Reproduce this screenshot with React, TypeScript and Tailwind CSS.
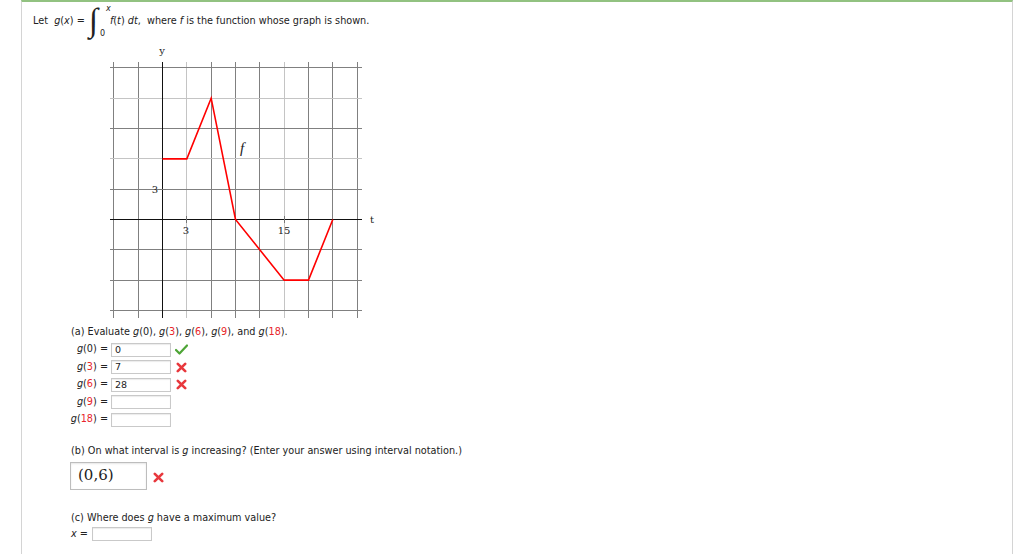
import React from 'react';

const F = "font-['DejaVu_Sans',Verdana,sans-serif]";

const Check = () => (
  <svg width="13" height="11" viewBox="0 0 13 11" className="shrink-0">
    <path d="M1 6 L4.5 9.5 L12 1.5" fill="none" stroke="#4ea536" strokeWidth="2.2" strokeLinecap="round" strokeLinejoin="round" />
  </svg>
);

const Cross = () => (
  <svg width="11" height="11" viewBox="0 0 11 11" className="shrink-0">
    <path d="M1.8 1.8 L9.2 9.2 M9.2 1.8 L1.8 9.2" fill="none" stroke="#e8383d" strokeWidth="2.6" strokeLinecap="round" />
  </svg>
);

// italic g with its argument; the argument is red unless told otherwise
const G = ({ n, red = true }: { n: string; red?: boolean }) => (
  <span>
    <i>g</i>(<span className={red ? 'text-[#e8262b]' : ''}>{n}</span>)
  </span>
);

const Graph = () => {
  const ox = 62; // y axis, svg coords
  const oy = 179; // x axis
  const dx = 24.33;
  const dy = 30.33;
  const xs = [-2, -1, 0, 1, 2, 3, 4, 5, 6, 7, 8];
  const ys = [-3, -2, -1, 0, 1, 2, 3, 4, 5];
  const light = new Set(['x1', 'x5', 'y2', 'y4']);
  const px = (k: number) => Math.round(ox + k * dx) + 0.5;
  const py = (j: number) => Math.round(oy - j * dy) + 0.5;
  const pts = [
    [0, 2], [1, 2], [2, 4], [3, 0], [5, -2], [6, -2], [7, 0],
  ].map(([k, j]) => `${ox + k * dx + 0.5},${oy - j * dy + 0.5}`).join(' ');
  return (
    <svg width="280" height="280" className="block">
      {xs.map((k) => (
        <line key={'x' + k} x1={px(k)} x2={px(k)} y1={22} y2={278}
          stroke={light.has('x' + k) ? '#c4c4c4' : '#808080'} strokeWidth="1" />
      ))}
      {ys.map((j) => (
        <line key={'y' + j} x1={10} x2={262} y1={py(j)} y2={py(j)}
          stroke={light.has('y' + j) ? '#c4c4c4' : '#808080'} strokeWidth="1" />
      ))}
      <line x1={10} x2={262} y1={oy + 0.5} y2={oy + 0.5} stroke="#111" strokeWidth="1" />
      <line x1={ox + 0.5} x2={ox + 0.5} y1={22} y2={278} stroke="#111" strokeWidth="1" />
      <line x1={ox - 4} x2={ox + 4} y1={py(1)} y2={py(1)} stroke="#777" />
      <line x1={px(1)} x2={px(1)} y1={oy - 3} y2={oy + 4} stroke="#777" />
      <line x1={px(5)} x2={px(5)} y1={oy - 3} y2={oy + 4} stroke="#777" />
      <polyline points={pts} fill="none" stroke="#ff0000" strokeWidth="1.6" strokeLinejoin="miter" />
      <g fontFamily="'DejaVu Serif','Liberation Serif',serif" fontSize="10" fill="#222">
        <text x={62} y={14} textAnchor="middle">y</text>
        <text x={270} y={183}>t</text>
        <text x={55} y={153} textAnchor="middle">3</text>
        <text x={86} y={194} textAnchor="middle">3</text>
        <text x={184} y={194} textAnchor="middle">15</text>
        <text x={140} y={113} fontSize="15" fontStyle="italic" fontFamily="'Liberation Serif',serif">f</text>
      </g>
    </svg>
  );
};

const Row = ({ label, value, mark }: { label: React.ReactNode; value: string; mark?: 'ok' | 'bad' }) => (
  <div className="flex items-center h-[17.5px]">
    <div className="w-[89px] text-right pr-[3px] whitespace-nowrap">{label} =</div>
    <div className="w-[60px] h-[14px] border border-[#c9c9c9] bg-white shadow-[inset_0_1px_1px_rgba(0,0,0,0.08)] pl-[3px] leading-[12px] text-[9.5px]">{value}</div>
    <div className="w-[21px] flex justify-center">
      {mark === 'ok' && <Check />}
      {mark === 'bad' && <Cross />}
    </div>
  </div>
);

export default function App() {
  return (
    <div className={`w-[1024px] h-[554px] bg-white overflow-hidden ${F} text-[9.7px] text-[#222]`}>
      <div className="ml-[21px] w-[992px] h-[554px] border-l border-r border-[#d4d4d4] border-t-2 border-t-[#92c281]">
        {/* statement */}
        <div className="h-[38px] flex items-center pl-[11px] whitespace-nowrap">
          <span>Let&nbsp;&nbsp;<i>g</i>(<i>x</i>)&nbsp;=&nbsp;</span>
          <span className="relative inline-block w-[22px] h-[36px]">
            <span className="absolute left-[1px] top-[-1px] font-['Liberation_Serif',serif] text-[33px] leading-[36px]">∫</span>
            <span className="absolute left-[18px] top-[1px] text-[8px] leading-[9px] italic">x</span>
            <span className="absolute left-[12px] top-[26px] text-[8px] leading-[9px]">0</span>
          </span>
          <span><i>f</i>(<i>t</i>) <i>dt</i>,&nbsp;&nbsp;where <i>f</i> is the function whose graph is shown.</span>
        </div>

        {/* graph */}
        <div className="ml-[78px]">
          <Graph />
        </div>

        {/* part a */}
        <div className="ml-[49px] mt-[6px] leading-[12px]">
          (a) Evaluate <G n="0" red={false} />, <G n="3" />, <G n="6" />, <G n="9" />, and <G n="18" />.
        </div>
        <div className="mt-[3px]">
          <Row label={<G n="0" red={false} />} value="0" mark="ok" />
          <Row label={<G n="3" />} value="7" mark="bad" />
          <Row label={<G n="6" />} value="28" mark="bad" />
          <Row label={<G n="9" />} value="" />
          <Row label={<G n="18" />} value="" />
        </div>

        {/* part b */}
        <div className="ml-[49px] mt-[16px] leading-[12px]">
          (b) On what interval is <i>g</i> increasing? (Enter your answer using interval notation.)
        </div>
        <div className="ml-[48px] mt-[5px] flex items-center">
          <div className="w-[77px] h-[28px] border border-[#bdbdbd] shadow-[inset_0_1px_2px_rgba(0,0,0,0.1)] flex items-center pl-[7px] font-['DejaVu_Serif','Liberation_Serif',serif] text-[15px]">
            (0,6)
          </div>
          <div className="ml-[6px] mt-[4px]"><Cross /></div>
        </div>

        {/* part c */}
        <div className="ml-[49px] mt-[22px] leading-[12px]">
          (c) Where does <i>g</i> have a maximum value?
        </div>
        <div className="ml-[49px] mt-[3px] flex items-center">
          <span className="w-[21px]"><i>x</i> =</span>
          <div className="w-[60px] h-[14px] border border-[#c9c9c9] shadow-[inset_0_1px_1px_rgba(0,0,0,0.08)]" />
        </div>
      </div>
    </div>
  );
}
